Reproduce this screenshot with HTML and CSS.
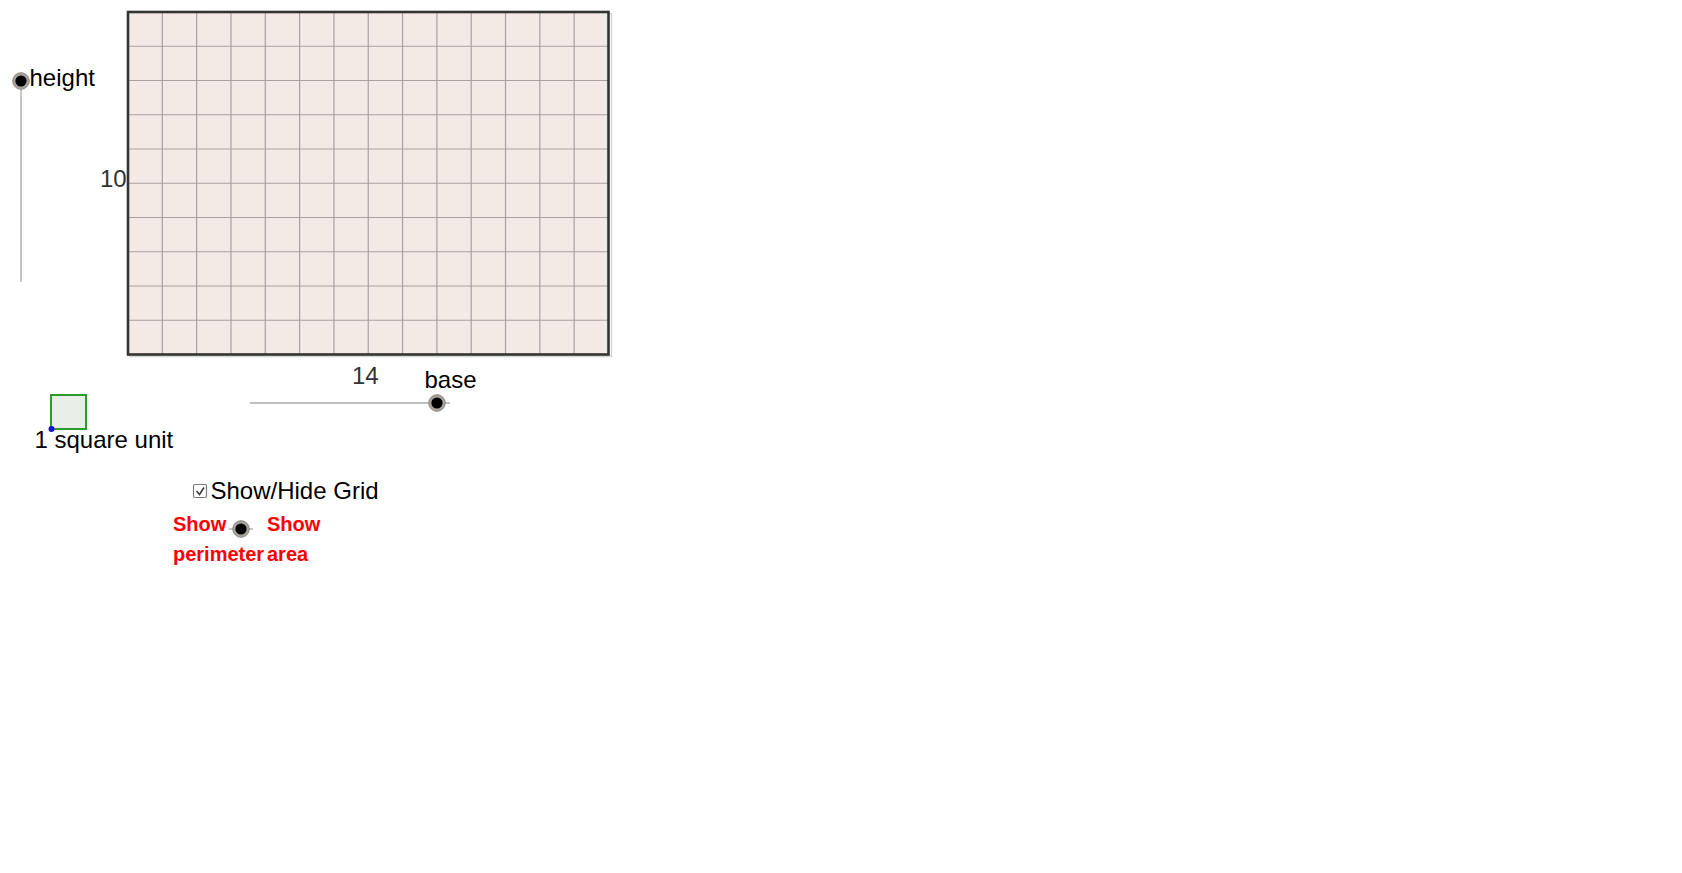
FILE: index.html
```html
<!DOCTYPE html>
<html lang="en">
<head>
<meta charset="utf-8">
<title>Area and Perimeter</title>
<link rel="stylesheet" href="styles.css">
</head>
<body>
<div class="applet">
  <svg class="board" width="1682" height="873" viewBox="0 0 1682 873" xmlns="http://www.w3.org/2000/svg">
    <!-- rectangle shadow -->
    <rect x="129.5" y="13.5" width="482" height="343" class="shadow"/>
    <!-- rectangle fill -->
    <rect x="128" y="12" width="480.5" height="342.5" class="fill"/>
    <g class="gridlines" id="grid"></g>
    <rect x="128" y="12" width="480.5" height="342.5" class="outline"/>

    <!-- height slider -->
    <line x1="21" y1="81" x2="21" y2="282" class="track"/>
    <circle cx="21" cy="81" r="8.3" class="knob-halo"/>
    <circle cx="21" cy="81" r="5.6" class="knob"/>

    <!-- base slider -->
    <line x1="250" y1="403" x2="450" y2="403" class="track"/>
    <circle cx="437" cy="403" r="8.3" class="knob-halo"/>
    <circle cx="437" cy="403" r="5.6" class="knob"/>

    <!-- perimeter/area toggle slider -->
    <line x1="229" y1="529" x2="253" y2="529" class="track"/>
    <circle cx="241" cy="529" r="8.3" class="knob-halo"/>
    <circle cx="241" cy="529" r="5.6" class="knob"/>

    <!-- unit square -->
    <rect x="51" y="395" width="35" height="34" class="unit"/>
    <circle cx="51.5" cy="429" r="3" class="unit-point"/>

    <!-- checkbox -->
    <rect x="193.5" y="484.5" width="13" height="13" rx="1.5" class="cb-box"/>
    <path d="M196.5 491 L199.5 494.5 L204 487.5" class="cb-check"/>
  </svg>

  <div class="label lbl-height">height</div>
  <div class="label lbl-ten">10</div>
  <div class="label lbl-fourteen">14</div>
  <div class="label lbl-base">base</div>
  <div class="label lbl-unit">1 square unit</div>
  <div class="label lbl-grid">Show/Hide Grid</div>
  <div class="red lbl-perim">Show<br>perimeter</div>
  <div class="red lbl-area">Show<br>area</div>
</div>
<script>
  (function () {
    var g = document.getElementById('grid');
    var ns = 'http://www.w3.org/2000/svg';
    var x0 = 128, y0 = 12, w = 480.5, h = 342.5;
    var i, l;
    for (i = 1; i < 14; i++) {
      var x = x0 + (w / 14) * i;
      l = document.createElementNS(ns, 'line');
      l.setAttribute('x1', x); l.setAttribute('x2', x);
      l.setAttribute('y1', y0); l.setAttribute('y2', y0 + h);
      g.appendChild(l);
    }
    for (i = 1; i < 10; i++) {
      var y = y0 + (h / 10) * i;
      l = document.createElementNS(ns, 'line');
      l.setAttribute('y1', y); l.setAttribute('y2', y);
      l.setAttribute('x1', x0); l.setAttribute('x2', x0 + w);
      g.appendChild(l);
    }
  })();
</script>
</body>
</html>
```

FILE: styles.css
```css
html, body {
  margin: 0;
  padding: 0;
  background: #ffffff;
}

.applet {
  position: relative;
  width: 1682px;
  height: 873px;
  overflow: hidden;
  font-family: "Liberation Sans", Arial, sans-serif;
}

.board {
  position: absolute;
  left: 0;
  top: 0;
}

.shadow {
  fill: none;
  stroke: #d6d6d6;
  stroke-width: 1.5;
}

.fill {
  fill: #f4eae5;
}

.gridlines line {
  stroke: #a9a1a0;
  stroke-width: 1.2;
}

.outline {
  fill: none;
  stroke: #333333;
  stroke-width: 2.6;
}

.track {
  stroke: #a7aba5;
  stroke-width: 1.3;
}

.knob-halo {
  fill: #a8a29e;
  stroke: #8f8a86;
  stroke-width: 1;
}

.knob {
  fill: #000000;
}

.unit {
  fill: #e7eee7;
  stroke: #2e9a2a;
  stroke-width: 2;
}

.unit-point {
  fill: #1010cc;
}

.cb-box {
  fill: #ffffff;
  stroke: #7d7d7d;
  stroke-width: 1.2;
}

.cb-check {
  fill: none;
  stroke: #333333;
  stroke-width: 1.5;
}

.label {
  position: absolute;
  font-size: 24px;
  line-height: 1;
  color: #000000;
  white-space: nowrap;
}

.lbl-height { left: 29.5px; top: 66px; }
.lbl-ten { left: 100px; top: 167px; color: #333333; }
.lbl-fourteen { left: 352px; top: 364px; color: #333333; }
.lbl-base { left: 424.5px; top: 368px; }
.lbl-unit { left: 34.5px; top: 428px; }
.lbl-grid { left: 210.5px; top: 479px; }

.red {
  position: absolute;
  font-size: 20px;
  font-weight: bold;
  line-height: 30px;
  color: #ff0000;
  white-space: nowrap;
}

.lbl-perim { left: 173px; top: 509px; }
.lbl-area { left: 267px; top: 509px; }
```
